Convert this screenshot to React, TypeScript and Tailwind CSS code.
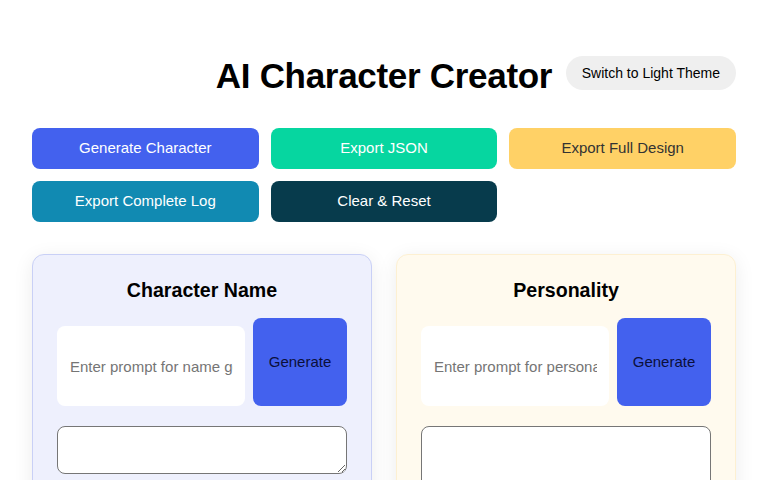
import React from "react";

const actions = [
  { label: "Generate Character", cls: "bg-[#4361ee] text-white" },
  { label: "Export JSON", cls: "bg-[#06d6a0] text-white" },
  { label: "Export Full Design", cls: "bg-[#ffd166] text-[#333]" },
  { label: "Export Complete Log", cls: "bg-[#118ab2] text-white" },
  { label: "Clear & Reset", cls: "bg-[#073b4c] text-white" },
];

function Section({
  title,
  placeholder,
  cardCls,
  areaCls,
}: {
  title: string;
  placeholder: string;
  cardCls: string;
  areaCls: string;
}) {
  return (
    <section className={`rounded-xl border p-6 shadow-[0_4px_20px_rgba(0,0,0,0.08)] ${cardCls}`}>
      <h2 className="mb-4 text-center text-[19.6px] font-bold leading-[23px] text-black">{title}</h2>
      <div className="flex items-end gap-2">
        <input
          className="h-[80px] min-w-0 flex-1 rounded-lg bg-white pl-[13px] pr-3 text-[15px] text-black outline-none placeholder:text-[#757575]"
          placeholder={placeholder}
        />
        <button className="h-[88px] w-[94px] shrink-0 rounded-lg bg-[#4361ee] text-[15px] text-[#0b0f3a]">
          Generate
        </button>
      </div>
      <textarea
        className={`mt-5 block w-full rounded-lg border border-[#767676] bg-white ${areaCls}`}
      />
    </section>
  );
}

export default function App() {
  return (
    <div className="min-h-screen bg-white px-8 pt-[55px] font-['Liberation_Sans',Arial,sans-serif]">
      {/* Header */}
      <header className="relative mb-8 flex h-[41px] items-center justify-center">
        <h1 className="text-[35px] font-bold leading-[41px] tracking-[-0.3px] text-black">
          AI Character Creator
        </h1>
        <button className="absolute right-0 top-[1px] h-[34px] rounded-full bg-[#efefef] px-4 text-[14px] text-black">
          Switch to Light Theme
        </button>
      </header>

      {/* Actions */}
      <div className="mb-8 grid grid-cols-3 gap-3">
        {actions.map((a) => (
          <button key={a.label} className={`h-[41px] rounded-lg text-[15px] ${a.cls}`}>
            {a.label}
          </button>
        ))}
      </div>

      {/* Fields */}
      <div className="grid grid-cols-2 gap-6">
        <Section
          title="Character Name"
          placeholder="Enter prompt for name generation"
          cardCls="bg-[#eef0fd] border-[#c9d0f6]"
          areaCls="h-[48px]"
        />
        <Section
          title="Personality"
          placeholder="Enter prompt for personality"
          cardCls="bg-[#fffaee] border-[#fdf0d2]"
          areaCls="h-[120px]"
        />
      </div>
    </div>
  );
}
